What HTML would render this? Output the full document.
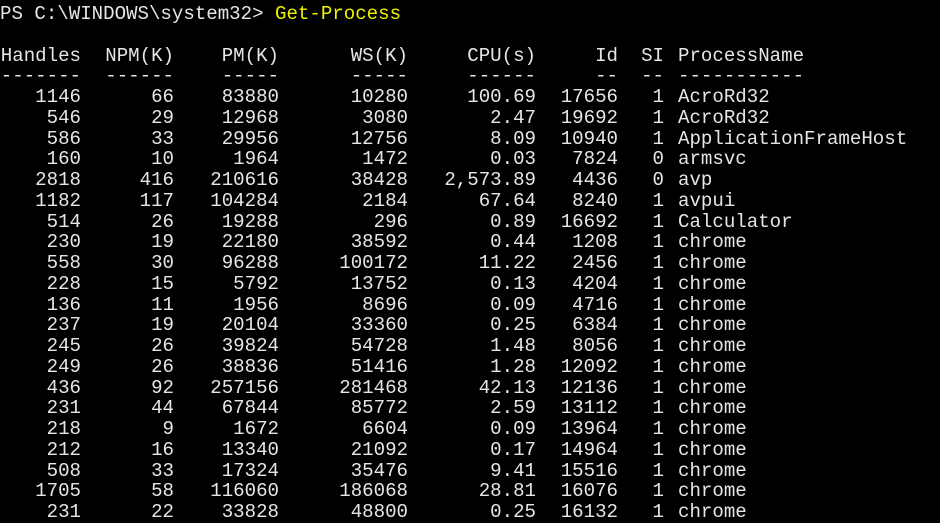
<!DOCTYPE html>
<html><head><meta charset="utf-8"><style>
html,body{margin:0;padding:0;background:#000;width:940px;height:508px;overflow:hidden}
.c{position:absolute;left:0;top:4px;font-family:"Liberation Mono",monospace;font-size:19.1px;line-height:20.75px;color:#e6e6e6}
.r{height:20.75px;display:flex;white-space:pre}
.r span{display:inline-block;text-align:right;white-space:pre}
.a{width:81px}.b{width:93px}.p{width:105px}.w{width:129px}.u{width:128px}.i{width:82px}.s{width:46px}
.r span.n{text-align:left;padding-left:14px}
.r span.y{color:#f2f200;text-align:left}
</style></head><body><div class="c"><div class="r">PS C:\WINDOWS\system32&gt; <span class="y">Get-Process</span></div><div class="r"> </div><div class="r"><span class="a">Handles</span><span class="b">NPM(K)</span><span class="p">PM(K)</span><span class="w">WS(K)</span><span class="u">CPU(s)</span><span class="i">Id</span><span class="s">SI</span><span class="n">ProcessName</span></div><div class="r"><span class="a">-------</span><span class="b">------</span><span class="p">-----</span><span class="w">-----</span><span class="u">------</span><span class="i">--</span><span class="s">--</span><span class="n">-----------</span></div><div class="r"><span class="a">1146</span><span class="b">66</span><span class="p">83880</span><span class="w">10280</span><span class="u">100.69</span><span class="i">17656</span><span class="s">1</span><span class="n">AcroRd32</span></div><div class="r"><span class="a">546</span><span class="b">29</span><span class="p">12968</span><span class="w">3080</span><span class="u">2.47</span><span class="i">19692</span><span class="s">1</span><span class="n">AcroRd32</span></div><div class="r"><span class="a">586</span><span class="b">33</span><span class="p">29956</span><span class="w">12756</span><span class="u">8.09</span><span class="i">10940</span><span class="s">1</span><span class="n">ApplicationFrameHost</span></div><div class="r"><span class="a">160</span><span class="b">10</span><span class="p">1964</span><span class="w">1472</span><span class="u">0.03</span><span class="i">7824</span><span class="s">0</span><span class="n">armsvc</span></div><div class="r"><span class="a">2818</span><span class="b">416</span><span class="p">210616</span><span class="w">38428</span><span class="u">2,573.89</span><span class="i">4436</span><span class="s">0</span><span class="n">avp</span></div><div class="r"><span class="a">1182</span><span class="b">117</span><span class="p">104284</span><span class="w">2184</span><span class="u">67.64</span><span class="i">8240</span><span class="s">1</span><span class="n">avpui</span></div><div class="r"><span class="a">514</span><span class="b">26</span><span class="p">19288</span><span class="w">296</span><span class="u">0.89</span><span class="i">16692</span><span class="s">1</span><span class="n">Calculator</span></div><div class="r"><span class="a">230</span><span class="b">19</span><span class="p">22180</span><span class="w">38592</span><span class="u">0.44</span><span class="i">1208</span><span class="s">1</span><span class="n">chrome</span></div><div class="r"><span class="a">558</span><span class="b">30</span><span class="p">96288</span><span class="w">100172</span><span class="u">11.22</span><span class="i">2456</span><span class="s">1</span><span class="n">chrome</span></div><div class="r"><span class="a">228</span><span class="b">15</span><span class="p">5792</span><span class="w">13752</span><span class="u">0.13</span><span class="i">4204</span><span class="s">1</span><span class="n">chrome</span></div><div class="r"><span class="a">136</span><span class="b">11</span><span class="p">1956</span><span class="w">8696</span><span class="u">0.09</span><span class="i">4716</span><span class="s">1</span><span class="n">chrome</span></div><div class="r"><span class="a">237</span><span class="b">19</span><span class="p">20104</span><span class="w">33360</span><span class="u">0.25</span><span class="i">6384</span><span class="s">1</span><span class="n">chrome</span></div><div class="r"><span class="a">245</span><span class="b">26</span><span class="p">39824</span><span class="w">54728</span><span class="u">1.48</span><span class="i">8056</span><span class="s">1</span><span class="n">chrome</span></div><div class="r"><span class="a">249</span><span class="b">26</span><span class="p">38836</span><span class="w">51416</span><span class="u">1.28</span><span class="i">12092</span><span class="s">1</span><span class="n">chrome</span></div><div class="r"><span class="a">436</span><span class="b">92</span><span class="p">257156</span><span class="w">281468</span><span class="u">42.13</span><span class="i">12136</span><span class="s">1</span><span class="n">chrome</span></div><div class="r"><span class="a">231</span><span class="b">44</span><span class="p">67844</span><span class="w">85772</span><span class="u">2.59</span><span class="i">13112</span><span class="s">1</span><span class="n">chrome</span></div><div class="r"><span class="a">218</span><span class="b">9</span><span class="p">1672</span><span class="w">6604</span><span class="u">0.09</span><span class="i">13964</span><span class="s">1</span><span class="n">chrome</span></div><div class="r"><span class="a">212</span><span class="b">16</span><span class="p">13340</span><span class="w">21092</span><span class="u">0.17</span><span class="i">14964</span><span class="s">1</span><span class="n">chrome</span></div><div class="r"><span class="a">508</span><span class="b">33</span><span class="p">17324</span><span class="w">35476</span><span class="u">9.41</span><span class="i">15516</span><span class="s">1</span><span class="n">chrome</span></div><div class="r"><span class="a">1705</span><span class="b">58</span><span class="p">116060</span><span class="w">186068</span><span class="u">28.81</span><span class="i">16076</span><span class="s">1</span><span class="n">chrome</span></div><div class="r"><span class="a">231</span><span class="b">22</span><span class="p">33828</span><span class="w">48800</span><span class="u">0.25</span><span class="i">16132</span><span class="s">1</span><span class="n">chrome</span></div></div></body></html>
